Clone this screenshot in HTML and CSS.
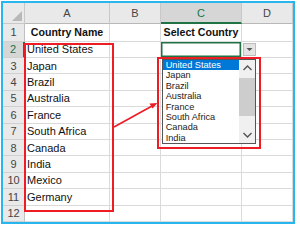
FILE: index.html
```html
<!DOCTYPE html>
<html>
<head>
<meta charset="utf-8">
<link rel="stylesheet" href="styles.css">
</head>
<body>
<div class="sheet">
  <div class="corner"><span class="tri"></span></div>
  <div class="ch">A</div>
  <div class="ch">B</div>
  <div class="ch ch-sel">C</div>
  <div class="ch">D</div>

  <div class="rh">1</div>
  <div class="c b ctr">Country Name</div>
  <div class="c"></div>
  <div class="c b ctr">Select Country</div>
  <div class="c"></div>

  <div class="rh rh-sel">2</div>
  <div class="c">United States</div>
  <div class="c"></div>
  <div class="c sel"></div>
  <div class="c"></div>

  <div class="rh">3</div>
  <div class="c">Japan</div>
  <div class="c"></div>
  <div class="c"></div>
  <div class="c"></div>

  <div class="rh">4</div>
  <div class="c">Brazil</div>
  <div class="c"></div>
  <div class="c"></div>
  <div class="c"></div>

  <div class="rh">5</div>
  <div class="c">Australia</div>
  <div class="c"></div>
  <div class="c"></div>
  <div class="c"></div>

  <div class="rh">6</div>
  <div class="c">France</div>
  <div class="c"></div>
  <div class="c"></div>
  <div class="c"></div>

  <div class="rh">7</div>
  <div class="c">South Africa</div>
  <div class="c"></div>
  <div class="c"></div>
  <div class="c"></div>

  <div class="rh">8</div>
  <div class="c">Canada</div>
  <div class="c"></div>
  <div class="c"></div>
  <div class="c"></div>

  <div class="rh">9</div>
  <div class="c">India</div>
  <div class="c"></div>
  <div class="c"></div>
  <div class="c"></div>

  <div class="rh">10</div>
  <div class="c">Mexico</div>
  <div class="c"></div>
  <div class="c"></div>
  <div class="c"></div>

  <div class="rh">11</div>
  <div class="c">Germany</div>
  <div class="c"></div>
  <div class="c"></div>
  <div class="c"></div>

  <div class="rh">12</div>
  <div class="c"></div>
  <div class="c"></div>
  <div class="c"></div>
  <div class="c"></div>

  <div class="redbox-a"></div>

  <svg class="arrow" width="290" height="219" viewBox="0 0 290 219">
    <line x1="111" y1="124" x2="150" y2="102.5" stroke="#ee1c25" stroke-width="1.6"/>
    <polygon points="154.5,100 146.5,100.5 149.5,105.5" fill="#ee1c25"/>
  </svg>

  <div class="ddbtn">
    <svg width="11" height="11" viewBox="0 0 11 11"><polygon points="2.5,4 8.5,4 5.5,7" fill="#555"/></svg>
  </div>

  <div class="redbox-list"></div>

  <div class="list">
    <div class="items">
      <div class="item hl">United States</div>
      <div class="item">Japan</div>
      <div class="item">Brazil</div>
      <div class="item">Australia</div>
      <div class="item">France</div>
      <div class="item">South Africa</div>
      <div class="item">Canada</div>
      <div class="item">India</div>
    </div>
    <div class="sb">
      <div class="sb-btn">
        <svg width="15" height="17" viewBox="0 0 15 17"><polyline points="3.5,10 7.5,6 11.5,10" fill="none" stroke="#555" stroke-width="1.4"/></svg>
      </div>
      <div class="sb-thumb"></div>
      <div class="sb-track"></div>
      <div class="sb-btn">
        <svg width="15" height="17" viewBox="0 0 15 17"><polyline points="3.5,7 7.5,11 11.5,7" fill="none" stroke="#555" stroke-width="1.4"/></svg>
      </div>
    </div>
  </div>
</div>
</body>
</html>
```

FILE: styles.css
```css
html, body {
  margin: 0;
  padding: 0;
  background: #ffffff;
}

body {
  font-family: "Liberation Sans", Arial, sans-serif;
}

.sheet {
  position: relative;
  margin: 1px 0 0 1px;
  width: 290px;
  height: 219px;
  border: 2px solid #29b5ee;
  display: grid;
  grid-template-columns: 22px 85px 51px 81px 51px;
  grid-template-rows: 21px 17.5px repeat(11, 16.41px);
  overflow: hidden;
  background: #fff;
}

.corner {
  position: relative;
  background: #e9e9e9;
  border-right: 1px solid #c8c8c8;
  border-bottom: 1px solid #c8c8c8;
  box-sizing: border-box;
}

.tri {
  position: absolute;
  right: 2px;
  bottom: 2px;
  width: 0;
  height: 0;
  border-left: 10px solid transparent;
  border-bottom: 10px solid #b8b8b8;
}

.ch {
  background: #e9e9e9;
  border-right: 1px solid #c8c8c8;
  border-bottom: 1px solid #b8b8b8;
  box-sizing: border-box;
  display: flex;
  align-items: center;
  justify-content: center;
  font-size: 11px;
  color: #444;
}

.ch-sel {
  background: #d6d6d6;
  color: #217346;
  border-bottom: 2px solid #217346;
}

.rh {
  background: #e9e9e9;
  border-right: 1px solid #c0c0c0;
  border-bottom: 1px solid #d0d0d0;
  box-sizing: border-box;
  display: flex;
  align-items: center;
  justify-content: center;
  font-size: 11px;
  color: #444;
}

.rh-sel {
  background: #d6d6d6;
  color: #217346;
  border-right: 2px solid #217346;
}

.c {
  border-right: 1px solid #dadada;
  border-bottom: 1px solid #dadada;
  box-sizing: border-box;
  display: flex;
  align-items: center;
  padding-left: 2px;
  font-size: 11px;
  color: #111;
  white-space: nowrap;
}

.b {
  font-weight: bold;
  font-size: 10.6px;
}

.ctr {
  justify-content: center;
  padding-left: 0;
}

.sel {
  box-shadow: inset 0 0 0 1.5px #217346;
}

.redbox-a {
  position: absolute;
  left: 21px;
  top: 39.5px;
  width: 90px;
  height: 169.5px;
  border: 2px solid #ee1c25;
  box-sizing: border-box;
}

.arrow {
  position: absolute;
  left: 0;
  top: 0;
}

.ddbtn {
  position: absolute;
  left: 240px;
  top: 40px;
  width: 13px;
  height: 13px;
  box-sizing: border-box;
  background: #e4e4e4;
  border: 1px solid #bdbdbd;
  display: flex;
  align-items: center;
  justify-content: center;
}

.redbox-list {
  position: absolute;
  left: 154px;
  top: 54.3px;
  width: 104px;
  height: 91.7px;
  border: 2px solid #ee1c25;
  box-sizing: border-box;
}

.list {
  position: absolute;
  left: 158.7px;
  top: 56px;
  width: 94.3px;
  height: 85px;
  box-sizing: border-box;
  border: 1px solid #555;
  background: #fff;
  display: flex;
}

.items {
  flex: 1;
  display: flex;
  flex-direction: column;
}

.item {
  height: 10.4px;
  line-height: 10.4px;
  font-size: 9.2px;
  padding-left: 3px;
  color: #222;
  white-space: nowrap;
}

.item.hl {
  background: #0078d7;
  color: #fff;
}

.sb {
  width: 15.5px;
  background: #f0f0f0;
  display: flex;
  flex-direction: column;
}

.sb-btn {
  height: 17px;
  display: flex;
  align-items: center;
  justify-content: center;
}

.sb-thumb {
  height: 38px;
  background: #cdcdcd;
  margin-top: 1px;
}

.sb-track {
  flex: 1;
}
```
